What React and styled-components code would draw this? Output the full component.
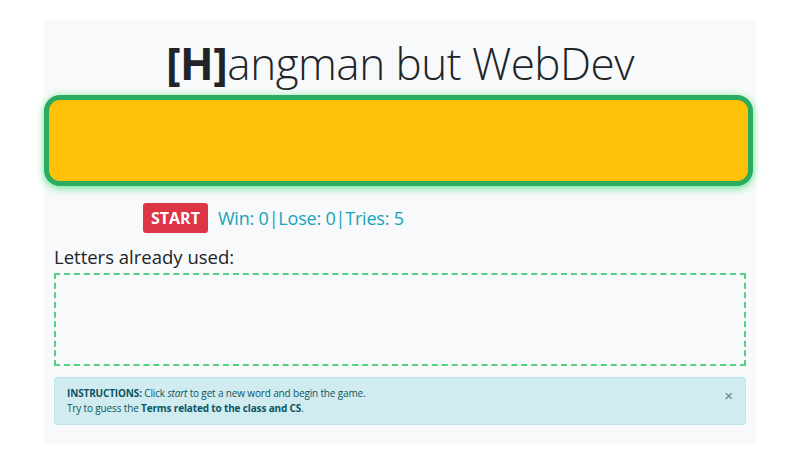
import React, { useState } from "react";
import styled, { createGlobalStyle } from "styled-components";

const Global = createGlobalStyle`
  html, body { margin: 0; padding: 0; background: #ffffff; }
  body { font-family: "Open Sans", "Noto Sans", Arial, sans-serif; color: #212529; }
`;

const Page = styled.div`
  width: 712px;
  margin: 20px auto 0;
  background: #f8f9fa;
  padding-bottom: 20px;
  display: flex;
  flex-direction: column;
`;

const Title = styled.h1`
  margin: 0;
  padding-top: 18px;
  height: 75px;
  box-sizing: border-box;
  text-align: center;
  font-size: 44px;
  line-height: 50px;
  font-weight: 300;
  color: #212529;
  letter-spacing: -0.5px;
`;

const Bold = styled.b`
  font-weight: 700;
`;

const Board = styled.div`
  height: 91px;
  margin-right: 3px;
  box-sizing: border-box;
  background: #ffc107;
  border: 5px solid #2bab5e;
  border-radius: 16px;
  box-shadow: 0 2px 8px #5fe08f;
`;

const Controls = styled.div`
  display: flex;
  align-items: center;
  gap: 10px;
  margin: 17px 0 0 99px;
`;

const StartButton = styled.button`
  height: 30px;
  padding: 0 8px;
  border: none;
  border-radius: 3px;
  background: #dc3545;
  color: #fff;
  font-family: inherit;
  font-size: 16px;
  font-weight: 700;
  cursor: pointer;
`;

const Stats = styled.span`
  font-size: 18px;
  letter-spacing: -0.2px;
  color: #17a2b8;
`;

const Label = styled.div`
  margin: 11px 0 0 10px;
  font-size: 18.5px;
  line-height: 26px;
`;

const Used = styled.div`
  margin: 3px 10px 0;
  height: 93px;
  box-sizing: border-box;
  border: 2px dashed #55cf82;
`;

const Alert = styled.div`
  margin: 11px 10px 0;
  padding: 8px 12px;
  display: flex;
  justify-content: space-between;
  align-items: flex-start;
  background: #d1ecf1;
  border: 1px solid #bee5eb;
  border-radius: 3px;
  color: #0c5460;
  font-size: 10px;
  letter-spacing: -0.15px;
  line-height: 15px;
`;

const Close = styled.button`
  border: none;
  background: none;
  padding: 0;
  margin-top: 2px;
  color: #5a7f87;
  font-size: 15px;
  line-height: 15px;
  cursor: pointer;
`;

export default function App() {
  const [open, setOpen] = useState(true);
  return (
    <>
      <Global />
      <Page>
        <Title>
          <Bold>[H]</Bold>angman but WebDev
        </Title>
        <Board />
        <Controls>
          <StartButton>START</StartButton>
          <Stats>Win: 0|Lose: 0|Tries: 5</Stats>
        </Controls>
        <Label>Letters already used:</Label>
        <Used />
        {open && (
          <Alert>
            <div>
              <b>INSTRUCTIONS:</b> Click <i>start</i> to get a new word and begin the game.
              <br />
              Try to guess the <b>Terms related to the class and CS</b>.
            </div>
            <Close onClick={() => setOpen(false)}>×</Close>
          </Alert>
        )}
      </Page>
    </>
  );
}
